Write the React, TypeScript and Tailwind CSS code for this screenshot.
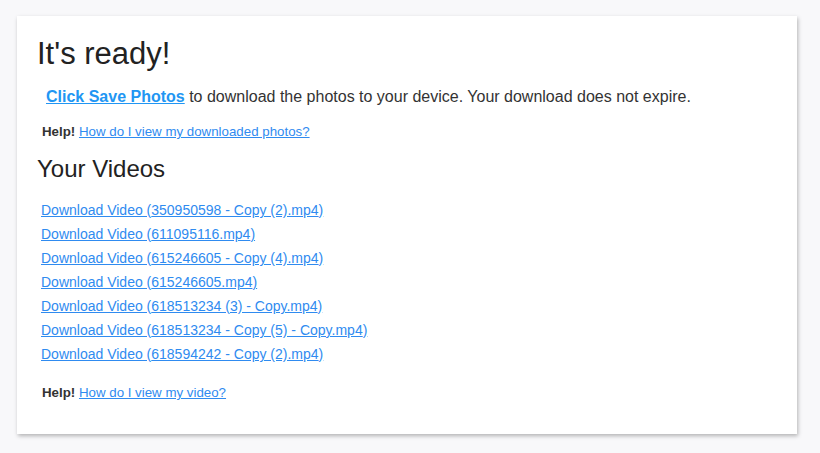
const VIDEOS = [
  "350950598 - Copy (2).mp4",
  "611095116.mp4",
  "615246605 - Copy (4).mp4",
  "615246605.mp4",
  "618513234 (3) - Copy.mp4",
  "618513234 - Copy (5) - Copy.mp4",
  "618594242 - Copy (2).mp4",
];

const HelpLine = ({ text }: { text: string }) => (
  <div className="pl-[5px] text-[13.3px] leading-[20px] text-[#333]">
    <span className="font-bold">Help!</span>{" "}
    <a href="#" className="text-[#2f8bf0] underline">
      {text}
    </a>
  </div>
);

const App = () => {
  return (
    <div className="min-h-[453px] w-full bg-[#f8f8fa] pl-[17px] pr-[23px] pt-[16px] pb-[19px] font-['Liberation_Sans',Arial,sans-serif]">
      <div className="h-[418px] w-[780px] bg-white px-[20px] pt-[21px] shadow-[1px_2px_4px_rgba(0,0,0,0.28)]">
        <h1 className="text-[31px] leading-[34px] text-[#222]">It's ready!</h1>
        <p className="mt-[14px] pl-[9px] text-[16px] leading-[24px] text-[#333]">
          <a href="#" className="font-bold text-[#2196f3] underline">
            Click Save Photos
          </a>{" "}
          to download the photos to your device. Your download does not expire.
        </p>
        <div className="mt-[13px]">
          <HelpLine text="How do I view my downloaded photos?" />
        </div>
        <h2 className="mt-[13px] text-[24px] leading-[28px] text-[#222]">Your Videos</h2>
        <ul className="mt-[15px] pl-[4px]">
          {VIDEOS.map((v) => (
            <li key={v} className="text-[14px] leading-[24px]">
              <a href="#" className="text-[#2f8bf0] underline">
                Download Video ({v})
              </a>
            </li>
          ))}
        </ul>
        <div className="mt-[17px]">
          <HelpLine text="How do I view my video?" />
        </div>
      </div>
    </div>
  );
};

export default App;
